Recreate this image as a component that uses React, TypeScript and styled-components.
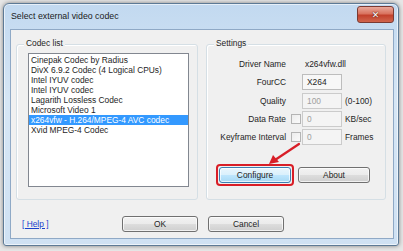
import styled, { createGlobalStyle } from "styled-components";

const GlobalStyle = createGlobalStyle`
    html, body {
        margin: 0;
        padding: 0;
        background: #e6e6e6;
    }
    body {
        font-family: "Liberation Sans", Arial, sans-serif;
        font-size: 8.4px;
        color: #1e1e1e;
    }
`;

const Screen = styled.div`
    width: 403px;
    height: 251px;
    padding: 3px;
    box-sizing: border-box;
`;

const Window = styled.div`
    width: 396px;
    height: 243px;
    box-sizing: border-box;
    border: 1px solid #5d7a96;
    border-radius: 6px 6px 3px 3px;
    background: linear-gradient(180deg, #c2d9f0 0%, #d6e6f5 40%, #cfe1f3 100%);
    box-shadow: 0 0 4px rgba(0, 0, 0, 0.45), inset 0 0 0 1px rgba(255, 255, 255, 0.6);
    display: flex;
    flex-direction: column;
`;

const TitleBar = styled.div`
    height: 25px;
    display: flex;
    align-items: flex-start;
    justify-content: space-between;
    padding: 0 4px 0 7px;
`;

const Title = styled.span`
    font-size: 8.8px;
    margin-top: 7px;
    color: #1b1b1b;
`;

const CloseButton = styled.div`
    width: 35px;
    height: 15px;
    margin-top: 2px;
    border: 1px solid #7a3a32;
    border-radius: 3px;
    background: linear-gradient(180deg, #e9a99b 0%, #d9735f 45%, #c2412c 55%, #d0654d 100%);
    display: flex;
    align-items: center;
    justify-content: center;
    color: #fff;
    font-family: "DejaVu Sans", sans-serif;
    font-weight: bold;
    font-size: 9px;
    text-shadow: 0 0 2px #5a1a10, 0 0 1px #5a1a10;
`;

const Client = styled.div`
    flex: 1;
    margin: 0 4px 6px 6px;
    border: 1px solid #8fa9c6;
    background: #f0f0f0;
    display: flex;
    flex-direction: column;
`;

const TopRow = styled.div`
    display: flex;
    gap: 8px;
    padding: 14px 7px 0 5px;
`;

const Group = styled.div<{ $width: number }>`
    position: relative;
    width: ${(p) => p.$width}px;
    height: 156px;
    box-sizing: border-box;
    border: 1px solid #d5dfe5;
    border-radius: 3px;
    box-shadow: inset 1px 1px 0 #fff;
`;

const GroupLabel = styled.span`
    position: absolute;
    top: -7px;
    left: 7px;
    padding: 0 2px;
    background: #f0f0f0;
    line-height: 10px;
`;

const ListBox = styled.div`
    margin: 8px 8px 0 11px;
    height: 134px;
    box-sizing: border-box;
    border: 1px solid #828790;
    background: #fff;
    padding-top: 1px;
`;

const ListItem = styled.div<{ $selected?: boolean }>`
    height: 10px;
    line-height: 10px;
    padding-left: 2px;
    white-space: nowrap;
    background: ${(p) => (p.$selected ? "#3399ff" : "transparent")};
    color: ${(p) => (p.$selected ? "#fff" : "#1e1e1e")};
`;

const SettingsGrid = styled.div`
    display: grid;
    grid-template-columns: 79px 16px 40px 1fr;
    grid-auto-rows: 16px;
    row-gap: 2.25px;
    align-items: center;
    margin-top: 11px;
`;

const FieldLabel = styled.span`
    grid-column: 1;
    text-align: right;
    white-space: nowrap;
`;

const PlainValue = styled.span`
    padding-left: 3px;
    grid-column: 3 / span 2;
`;

const Field = styled.div<{ $disabled?: boolean }>`
    grid-column: 3;
    height: 16px;
    box-sizing: border-box;
    border: 1px solid ${(p) => (p.$disabled ? "#cbcbcb" : "#bdbdbd")};
    background: ${(p) => (p.$disabled ? "#f4f4f4" : "#f7f7f7")};
    color: ${(p) => (p.$disabled ? "#a0a0a0" : "#1e1e1e")};
    padding-left: 4px;
    line-height: 14px;
`;

const Unit = styled.span`
    grid-column: 4;
    padding-left: 3px;
    white-space: nowrap;
`;

const CheckBox = styled.div`
    grid-column: 2;
    justify-self: end;
    margin-right: 1px;
    width: 10px;
    height: 10px;
    box-sizing: border-box;
    border: 1px solid #b4b4b4;
    background: linear-gradient(135deg, #ececec, #fafafa);
`;

const ButtonRow = styled.div`
    position: relative;
    display: flex;
    align-items: center;
    gap: 4px;
    margin: 19px 0 0 9px;
`;

const Highlight = styled.div`
    border: 2px solid #d81e27;
    border-radius: 4px;
    padding: 1px;
    display: flex;
`;

const Button = styled.div<{ $focused?: boolean; $width?: number }>`
    width: ${(p) => p.$width ?? 72}px;
    height: 16px;
    box-sizing: border-box;
    border: 1px solid ${(p) => (p.$focused ? "#3c7fb1" : "#707070")};
    border-radius: 3px;
    background: ${(p) =>
        p.$focused
            ? "linear-gradient(180deg, #eaf6fd 0%, #d9f0fc 50%, #bee6fd 51%, #a7d9f5 100%)"
            : "linear-gradient(180deg, #f2f2f2 0%, #ebebeb 50%, #dddddd 51%, #cfcfcf 100%)"};
    box-shadow: inset 0 0 0 1px rgba(255, 255, 255, 0.7);
    display: flex;
    align-items: center;
    justify-content: center;
    color: #1e1e1e;
`;

const Arrow = styled.svg`
    position: absolute;
    left: 45px;
    top: -22px;
    overflow: visible;
`;

const BottomRow = styled.div`
    display: flex;
    align-items: center;
    gap: 10px;
    margin-top: 16px;
    padding-left: 11px;
`;

const HelpLink = styled.span`
    flex: 0 0 90px;
    color: #1a3fcc;
    text-decoration: underline;
`;

const codecs = [
    "Cinepak Codec by Radius",
    "DivX 6.9.2 Codec (4 Logical CPUs)",
    "Intel IYUV codec",
    "Intel IYUV codec",
    "Lagarith Lossless Codec",
    "Microsoft Video 1",
    "x264vfw - H.264/MPEG-4 AVC codec",
    "Xvid MPEG-4 Codec",
];

export default function App() {
    return (
        <Screen>
            <GlobalStyle />
            <Window>
                <TitleBar>
                    <Title>Select external video codec</Title>
                    <CloseButton>✕</CloseButton>
                </TitleBar>
                <Client>
                    <TopRow>
                        <Group $width={182}>
                            <GroupLabel>Codec list</GroupLabel>
                            <ListBox>
                                {codecs.map((c, i) => (
                                    <ListItem key={i} $selected={i === 6}>
                                        {c}
                                    </ListItem>
                                ))}
                            </ListBox>
                        </Group>
                        <Group $width={180}>
                            <GroupLabel>Settings</GroupLabel>
                            <SettingsGrid>
                                <FieldLabel>Driver Name</FieldLabel>
                                <PlainValue>x264vfw.dll</PlainValue>

                                <FieldLabel>FourCC</FieldLabel>
                                <Field>X264</Field>

                                <FieldLabel>Quality</FieldLabel>
                                <Field $disabled>100</Field>
                                <Unit>(0-100)</Unit>

                                <FieldLabel>Data Rate</FieldLabel>
                                <CheckBox />
                                <Field $disabled>0</Field>
                                <Unit>KB/sec</Unit>

                                <FieldLabel>Keyframe Interval</FieldLabel>
                                <CheckBox />
                                <Field $disabled>0</Field>
                                <Unit>Frames</Unit>
                            </SettingsGrid>
                            <ButtonRow>
                                <Highlight>
                                    <Button $focused>Configure</Button>
                                </Highlight>
                                <Button>About</Button>
                                <Arrow width="40" height="30" viewBox="0 0 40 30">
                                    <line x1="38" y1="2" x2="14" y2="18" stroke="#d81e27" strokeWidth="2.2" strokeLinecap="round" />
                                    <polygon points="8,22 12,13 18,20" fill="#d81e27" />
                                </Arrow>
                            </ButtonRow>
                        </Group>
                    </TopRow>
                    <BottomRow>
                        <HelpLink>[ Help ]</HelpLink>
                        <Button $width={76}>OK</Button>
                        <Button $width={76}>Cancel</Button>
                    </BottomRow>
                </Client>
            </Window>
        </Screen>
    );
}
